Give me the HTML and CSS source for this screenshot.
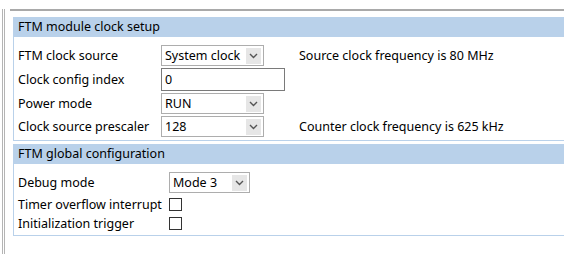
FILE: index.html
```html
<!DOCTYPE html>
<html lang="en">
<head>
    <meta charset="UTF-8">
    <title>FTM configuration</title>
    <link rel="stylesheet" href="styles.css">
</head>
<body>
<div class="frame">
    <div class="view">
        <div class="group">
            <div class="group-title">FTM module clock setup</div>
            <div class="group-body grid-clock">
                <span class="label">FTM clock source</span>
                <div class="select w103"><span>System clock</span><i class="arrow"><svg width="9" height="6" viewBox="0 0 9 6"><path d="M1 1 L4.5 4.5 L8 1" fill="none" stroke="#555" stroke-width="1.4"/></svg></i></div>
                <span class="note">Source clock frequency is 80 MHz</span>

                <span class="label">Clock config index</span>
                <div class="input"><span>0</span></div>
                <span></span>

                <span class="label">Power mode</span>
                <div class="select w103"><span>RUN</span><i class="arrow"><svg width="9" height="6" viewBox="0 0 9 6"><path d="M1 1 L4.5 4.5 L8 1" fill="none" stroke="#555" stroke-width="1.4"/></svg></i></div>
                <span></span>

                <span class="label">Clock source prescaler</span>
                <div class="select w103"><span>128</span><i class="arrow"><svg width="9" height="6" viewBox="0 0 9 6"><path d="M1 1 L4.5 4.5 L8 1" fill="none" stroke="#555" stroke-width="1.4"/></svg></i></div>
                <span class="note">Counter clock frequency is 625 kHz</span>
            </div>
        </div>
        <div class="group">
            <div class="group-title">FTM global configuration</div>
            <div class="group-body grid-global">
                <span class="label">Debug mode</span>
                <div class="select w81"><span>Mode 3</span><i class="arrow"><svg width="9" height="6" viewBox="0 0 9 6"><path d="M1 1 L4.5 4.5 L8 1" fill="none" stroke="#555" stroke-width="1.4"/></svg></i></div>

                <span class="label">Timer overflow interrupt</span>
                <div class="check"></div>

                <span class="label">Initialization trigger</span>
                <div class="check"></div>
            </div>
        </div>
    </div>
</div>
</body>
</html>
```

FILE: styles.css
```css
*{
    margin: 0;
    padding: 0;
    box-sizing: border-box;
}

body{
    width: 564px;
    height: 254px;
    overflow: hidden;
    background: #fff;
    color: #000;
    font-family: "Noto Sans", "Liberation Sans", sans-serif;
    font-size: 12.5px;
    padding-left: 2px;
}

.frame{
    height: 254px;
    border-left: 3px double #b4b4b4;
    padding-left: 5px;
}

.view{
    margin-top: 9px;
    border-top: 2px solid #a9a9a9;
    padding: 6px 0 0 3px;
}

.group{
    margin-bottom: 3px;
}

.group-title{
    height: 20px;
    line-height: 20px;
    background: #b9d1ea;
    padding-left: 5px;
}

.group-body{
    border-left: 1px solid #b9d1ea;
    border-bottom: 1px solid #b9d1ea;
    display: grid;
    align-items: center;
    padding-left: 4px;
}

.grid-clock{
    grid-template-columns: 143px 138px auto;
    row-gap: 2px;
    padding-top: 8px;
    padding-bottom: 3px;
}

.grid-global{
    grid-template-columns: 151px auto;
    row-gap: 4px;
    padding-top: 8px;
    padding-bottom: 4px;
}

.grid-global .label{
    height: 15px;
}

.label{
    white-space: nowrap;
    line-height: 16px;
}

.note{
    white-space: nowrap;
}

.select{
    height: 21px;
    border: 1px solid #adadad;
    display: flex;
    align-items: center;
    justify-content: space-between;
    padding: 1px 2px 1px 3px;
    background: #fff;
}

.w103{
    width: 103px;
}

.w81{
    width: 81px;
}

.arrow{
    width: 15px;
    height: 16px;
    background: #e6e6e6;
    display: flex;
    align-items: center;
    justify-content: center;
}

.input{
    width: 124px;
    height: 23px;
    border: 1px solid #7a7a7a;
    padding-left: 3px;
    display: flex;
    align-items: center;
}

.check{
    width: 13px;
    height: 13px;
    border: 1px solid #333;
    background: #fff;
}
```
